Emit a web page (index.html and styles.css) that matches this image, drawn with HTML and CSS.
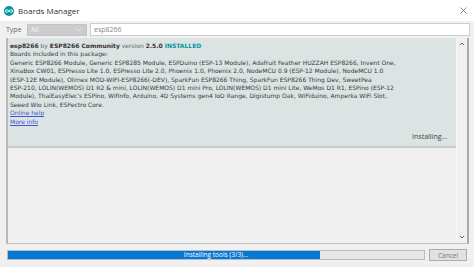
FILE: index.html
```html
<!DOCTYPE html>
<html lang="en">
<head>
    <meta charset="UTF-8">
    <title>Boards Manager</title>
    <link rel="stylesheet" href="styles.css">
</head>
<body>
    <div class="window">
        <header class="titlebar">
            <svg class="logo" width="10" height="10" viewBox="0 0 10 10">
                <circle cx="5" cy="5" r="5" fill="#00979c"/>
                <path d="M2.9 3.6 a1.4 1.4 0 1 0 0 2.8 c0.9 0 1.5-1.4 2.1-1.4 c0.6 0 1.2 1.4 2.1 1.4 a1.4 1.4 0 1 0 0-2.8 c-0.9 0-1.5 1.4-2.1 1.4 c-0.6 0-1.2-1.4-2.1-1.4z" fill="none" stroke="#fff" stroke-width="0.9"/>
            </svg>
            <span class="title">Boards Manager</span>
            <svg class="close" width="7" height="7" viewBox="0 0 7 7">
                <path d="M0.5 0.5 L6.5 6.5 M6.5 0.5 L0.5 6.5" stroke="#666" stroke-width="0.8"/>
            </svg>
        </header>

        <div class="filters">
            <label class="type-label">Type</label>
            <div class="select">
                <span>All</span>
                <svg width="6" height="4" viewBox="0 0 6 4"><path d="M0.5 0.5 L3 3 L5.5 0.5" fill="none" stroke="#eee" stroke-width="0.8"/></svg>
            </div>
            <input class="search" type="text" value="esp8266">
        </div>

        <div class="list">
            <div class="items">
                <div class="item selected">
                    <p class="heading"><b>esp8266</b> by <b>ESP8266 Community</b> version <b>2.5.0</b> <b class="installed">INSTALLED</b></p>
                    <p>Boards included in this package:</p>
                    <p>Generic ESP8266 Module, Generic ESP8285 Module, ESPDuino (ESP-13 Module), Adafruit Feather HUZZAH ESP8266, Invent One,<br>XinaBox CW01, ESPresso Lite 1.0, ESPresso Lite 2.0, Phoenix 1.0, Phoenix 2.0, NodeMCU 0.9 (ESP-12 Module), NodeMCU 1.0<br>(ESP-12E Module), Olimex MOD-WIFI-ESP8266(-DEV), SparkFun ESP8266 Thing, SparkFun ESP8266 Thing Dev, SweetPea<br>ESP-210, LOLIN(WEMOS) D1 R2 &amp; mini, LOLIN(WEMOS) D1 mini Pro, LOLIN(WEMOS) D1 mini Lite, WeMos D1 R1, ESPino (ESP-12<br>Module), ThaiEasyElec's ESPino, WifInfo, Arduino, 4D Systems gen4 IoD Range, Digistump Oak, WiFiduino, Amperka WiFi Slot,<br>Seeed Wio Link, ESPectro Core.</p>
                    <p><a href="#">Online help</a></p>
                    <p><a href="#">More info</a></p>
                    <div class="item-status">Installing...</div>
                </div>
            </div>
            <div class="scrollbar">
                <svg class="arrow" width="6" height="4" viewBox="0 0 6 4"><path d="M0.8 3.2 L3 1 L5.2 3.2" fill="none" stroke="#555" stroke-width="0.9"/></svg>
                <svg class="arrow" width="6" height="4" viewBox="0 0 6 4"><path d="M0.8 0.8 L3 3 L5.2 0.8" fill="none" stroke="#555" stroke-width="0.9"/></svg>
            </div>
        </div>

        <div class="status">
            <div class="progress">
                <div class="bar" style="width: 75%"></div>
                <span class="progress-text">Installing tools (3/3)...</span>
            </div>
            <button class="cancel" type="button">Cancel</button>
        </div>
    </div>
</body>
</html>
```

FILE: styles.css
```css
/* Window */
body {
    margin: 0;
    background-color: #f0f0f0;
    font-family: "Open Sans", "Noto Sans", sans-serif;
    color: #333;
}

.window {
    width: 474px;
    height: 267px;
    display: flex;
    flex-direction: column;
    overflow: hidden;
}

/* Title bar */
.titlebar {
    height: 21px;
    display: flex;
    align-items: center;
    padding: 0 7px 0 4px;
    background-color: #ffffff;
}

.logo {
    margin-right: 4px;
}

.title {
    font-size: 8px;
    color: #333;
    flex: 1;
}

/* Filter row */
.filters {
    display: flex;
    align-items: center;
    gap: 3px;
    height: 13px;
    padding: 2px 4px 0 6px;
}

.type-label {
    font-size: 7px;
    color: #666;
    width: 18px;
}

.select {
    width: 60px;
    height: 12px;
    box-sizing: border-box;
    display: flex;
    align-items: center;
    justify-content: space-between;
    padding: 0 4px 0 3px;
    background-color: #cccccc;
    border: 1px solid #c4c4c4;
    font-size: 7px;
    color: #f4f4f4;
}

.search {
    flex: 1;
    height: 13px;
    box-sizing: border-box;
    margin: 0;
    padding: 0 3px;
    border: 1px solid #cdcdcd;
    background-color: #fff;
    font-family: "Open Sans", "Noto Sans", sans-serif;
    font-size: 7px;
    color: #888;
}

/* List */
.list {
    margin: 2px 5px 0 6px;
    height: 205px;
    display: flex;
    border-left: 2px solid #b9b9b9;
    border-right: 2px solid #a9a9a9;
    border-bottom: 1px solid #c2c2c2;
    background-color: #efefef;
}

.items {
    flex: 1;
}

.item {
    height: 100px;
    padding: 4px 9px 4px 2px;
    background-color: #dce3e3;
    border-bottom: 2px solid #c7cdcd;
    font-family: "DejaVu Sans", Verdana, sans-serif;
    font-size: 6px;
    line-height: 8.4px;
    color: #3a3a3a;
    white-space: nowrap;
}

.item p {
    margin: 0;
}

.heading {
    color: #666;
}

.heading b {
    color: #333;
}

.heading .installed {
    color: #00979c;
}

.item a {
    color: #3f55d6;
}

.item-status {
    margin-top: 7px;
    text-align: right;
    font-family: "Open Sans", "Noto Sans", sans-serif;
    font-size: 7px;
    color: #444;
}

.scrollbar {
    width: 10px;
    display: flex;
    flex-direction: column;
    justify-content: space-between;
    align-items: center;
    padding: 4px 0 4px;
    border-left: 1px solid #f8f8f8;
    background-color: #f0f0f0;
}

/* Progress row */
.status {
    display: flex;
    align-items: center;
    gap: 4px;
    margin: 5px 7px 0 7px;
}

.progress {
    position: relative;
    flex: 1;
    height: 10px;
    box-sizing: border-box;
    border: 1px solid #bcbcbc;
    background-color: #e6e6e6;
}

.bar {
    height: 100%;
    background-color: #0678d4;
}

.progress-text {
    position: absolute;
    top: 0;
    left: 0;
    right: 0;
    text-align: center;
    font-size: 6.5px;
    line-height: 8px;
    color: #fff;
}

.cancel {
    width: 38px;
    height: 12px;
    padding: 0;
    background-color: #e1e1e1;
    border: 1px solid #adadad;
    font-family: "Open Sans", "Noto Sans", sans-serif;
    font-size: 6.5px;
    color: #777;
}
```
